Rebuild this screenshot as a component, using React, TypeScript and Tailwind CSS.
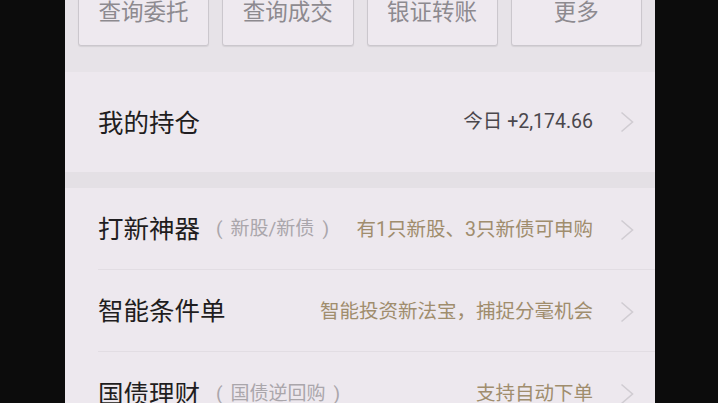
import React from 'react';

const font = { fontFamily: "Roboto, 'Noto Sans CJK SC', sans-serif" };

function Chevron() {
  return (
    <svg width="14" height="22" viewBox="0 0 14 22" className="shrink-0">
      <polyline points="1.5,1.5 12.5,11 1.5,20.5" fill="none" stroke="#d0ccd2" strokeWidth="1.6" />
    </svg>
  );
}

const actions = ['查询委托', '查询成交', '银证转账', '更多'];

const rows = [
  { title: '打新神器', tag: '新股/新债', hint: '有1只新股、3只新债可申购' },
  { title: '智能条件单', tag: '', hint: '智能投资新法宝，捕捉分毫机会' },
  { title: '国债理财', tag: '国债逆回购', hint: '支持自动下单' },
];

export default function App() {
  return (
    <div className="flex h-[403px] w-[718px] overflow-hidden bg-[#0c0c0c]" style={font}>
      <div className="ml-[65px] flex w-[590px] flex-col bg-[#e7e3e8]">
        {/* quick actions */}
        <div className="-mt-[24px] grid grid-cols-4 gap-[13px] px-[13px] pb-[26px]">
          {actions.map((a) => (
            <div
              key={a}
              className="flex h-[70px] items-center justify-center rounded-b-[3px] border border-[#cbc7cd] bg-[#eee9ef] pt-[4px] text-[22.5px] text-[#8d8a8f] shadow-[0_1px_1px_rgba(0,0,0,0.08)]"
            >
              {a}
            </div>
          ))}
        </div>

        {/* holdings */}
        <div className="flex h-[100px] shrink-0 items-center bg-[#ede8ee] pl-[33px] pr-[21px]">
          <span className="pt-[2px] text-[25.5px] text-[#1f1d20]">我的持仓</span>
          <span className="ml-auto text-[19.5px] text-[#4a474c]">今日 +2,174.66</span>
          <span className="ml-[27px]">
            <Chevron />
          </span>
        </div>

        <div className="h-[16px] shrink-0 bg-[#e4e0e5]" />

        {/* feature list */}
        <div className="flex flex-col bg-[#ede8ee] pl-[33px]">
          {rows.map((r, i) => (
            <div
              key={r.title}
              className={`flex h-[82px] shrink-0 items-center pr-[21px] pt-[2px] ${i < rows.length - 1 ? 'border-b border-[#e2dde3]' : ''}`}
            >
              <span className="text-[25.5px] text-[#1f1d20]">{r.title}</span>
              {r.tag && (
                <span className="ml-[16px] flex items-center gap-[8px] text-[19px] text-[#aaa6ab]">
                  <span>(</span>
                  <span>{r.tag}</span>
                  <span>)</span>
                </span>
              )}
              <span className="ml-auto text-[19.5px] text-[#a08d6d]">{r.hint}</span>
              <span className="ml-[27px]">
                <Chevron />
              </span>
            </div>
          ))}
        </div>
      </div>
    </div>
  );
}
